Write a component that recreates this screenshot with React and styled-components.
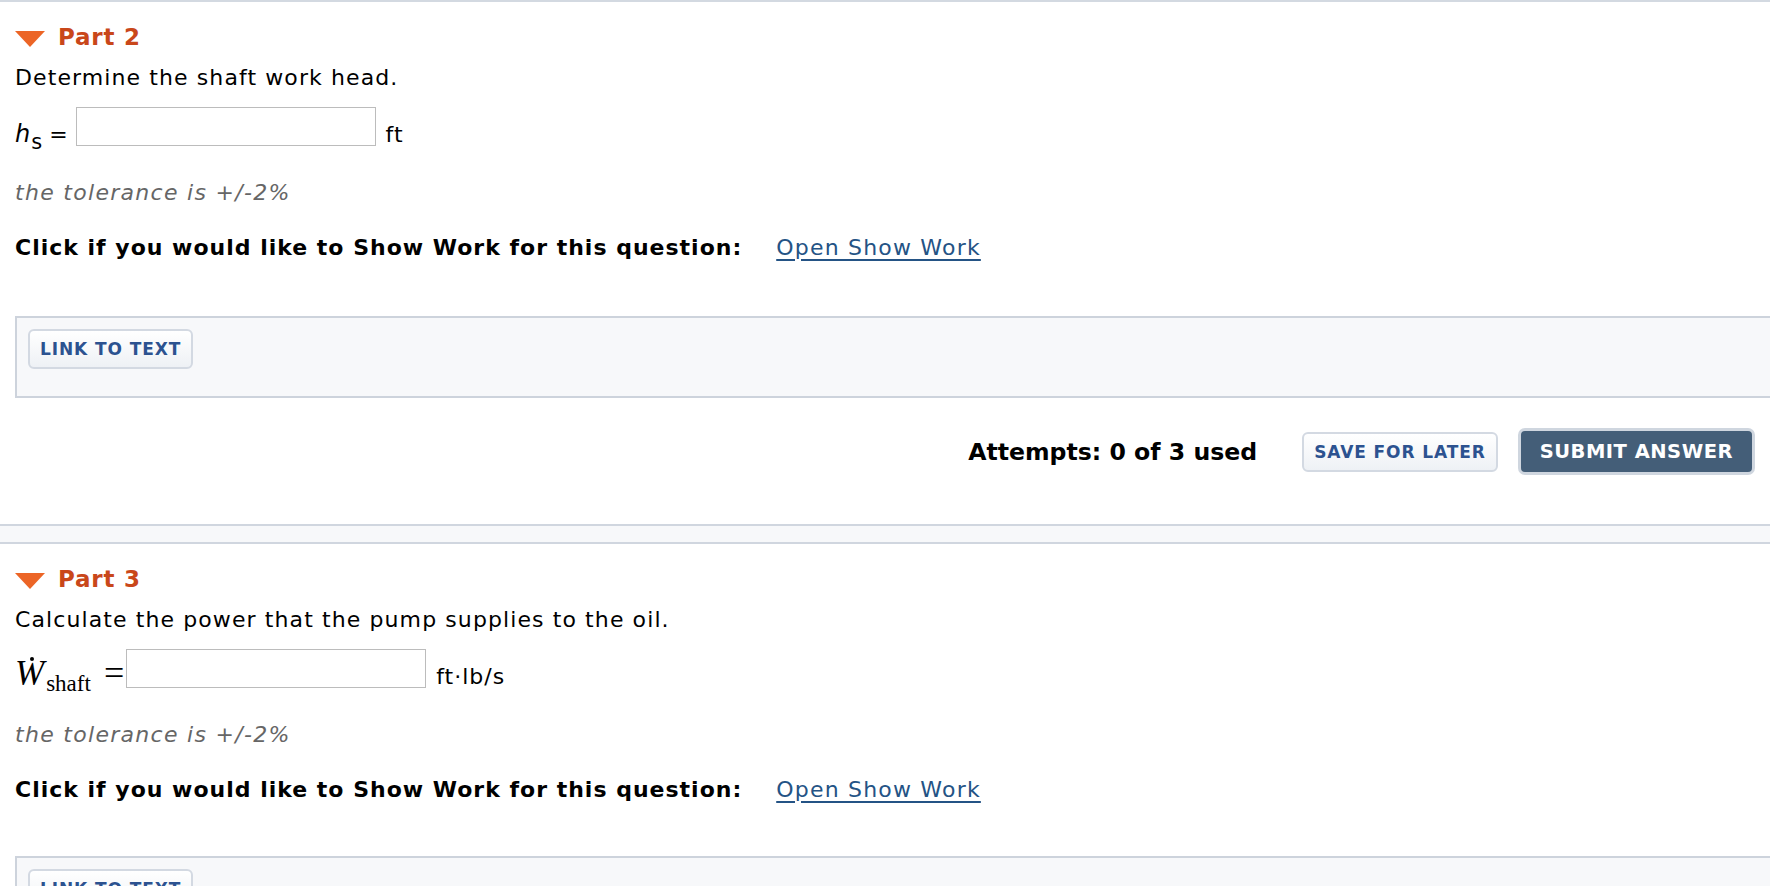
import React from "react";
import styled, { createGlobalStyle } from "styled-components";

const GlobalStyle = createGlobalStyle`
  html, body {
    margin: 0;
    padding: 0;
    background: #fff;
  }
  body {
    font-family: "DejaVu Sans", Verdana, sans-serif;
    color: #000;
    overflow: hidden;
  }
`;

const Page = styled.div`
  width: 100%;
  border-top: 2px solid #d3d9e1;
`;

const Part = styled.section`
  padding: 20px 15px 0 15px;
`;

const Header = styled.div`
  display: flex;
  align-items: center;
  gap: 13px;
  height: 30px;
  font-size: 23px;
  letter-spacing: 0.8px;
  font-weight: bold;
  color: #c9471a;
`;

const Arrow = styled.span`
  display: block;
  width: 0;
  height: 0;
  margin-top: 3px;
  border-left: 15px solid transparent;
  border-right: 15px solid transparent;
  border-top: 16px solid #ec6526;
`;

const Question = styled.div`
  margin-top: 11px;
  height: 30px;
  line-height: 30px;
  font-size: 22px;
  letter-spacing: 1.1px;
`;

const AnswerRow = styled.div`
  display: flex;
  align-items: center;
  margin-top: 14px;
  height: 39px;
  font-size: 22px;
  letter-spacing: 1px;
`;

const Label = styled.span`
  display: inline-flex;
  align-items: baseline;
  margin-right: ${(p) => p.gap || "8px"};
  white-space: nowrap;
  letter-spacing: 0;
  position: relative;
  top: ${(p) => p.shift || "7px"};
`;

const Var = styled.i`
  font-style: italic;
  font-size: 24px;
`;

const Sub = styled.span`
  font-size: 21px;
  position: relative;
  top: 7px;
  margin-left: 1px;
  margin-right: 7px;
`;

const MathVar = styled.span`
  font-family: "Liberation Serif", "Times New Roman", serif;
  font-style: italic;
  font-size: 35px;
  position: relative;
`;

const Dot = styled.span`
  position: absolute;
  left: 15px;
  top: 3px;
  width: 4px;
  height: 4px;
  border-radius: 50%;
  background: #000;
`;

const MathSub = styled.span`
  font-family: "Liberation Serif", "Times New Roman", serif;
  font-size: 23px;
  position: relative;
  top: 6px;
  margin-left: 2px;
  margin-right: 13px;
`;

const MathEq = styled.span`
  font-family: "Liberation Serif", "Times New Roman", serif;
  font-size: 36px;
  margin-right: 2px;
`;

const Input = styled.input`
  box-sizing: border-box;
  width: 300px;
  height: 39px;
  border: 1px solid #bcbcbc;
  background: #fff;
  margin: 0;
  padding: 0 6px;
  outline: none;
`;

const Unit = styled.span`
  margin-left: 10px;
  position: relative;
  top: 8px;
`;

const Tolerance = styled.div`
  margin-top: 32px;
  height: 30px;
  line-height: 30px;
  font-size: 22px;
  letter-spacing: 1.3px;
  font-style: italic;
  color: #666;
`;

const ShowWork = styled.div`
  display: flex;
  align-items: center;
  margin-top: 24px;
  height: 30px;
  font-size: 22px;
  letter-spacing: 1px;
`;

const Bold = styled.span`
  font-weight: bold;
`;

const WorkLink = styled.a`
  margin-left: 34px;
  color: #245385;
  letter-spacing: 1.2px;
  text-decoration: underline;
  text-underline-offset: 4px;
  cursor: pointer;
`;

const LinkBox = styled.div`
  box-sizing: border-box;
  margin-top: ${(p) => p.top || "54px"};
  margin-right: -15px;
  height: 82px;
  padding: 11px;
  background: #f7f8fa;
  border: 2px solid #cdd3dc;
  border-right: none;
`;

const SmallButton = styled.button`
  box-sizing: border-box;
  height: 40px;
  padding: 0 10px;
  border: 2px solid #d3d9e2;
  border-radius: 6px;
  background: linear-gradient(#ffffff, #eef1f5);
  color: #2c5290;
  font-family: "DejaVu Sans", Verdana, sans-serif;
  font-weight: bold;
  font-size: 17px;
  letter-spacing: 0.9px;
  cursor: pointer;
`;

const Actions = styled.div`
  display: flex;
  align-items: center;
  justify-content: flex-end;
  gap: 20px;
  margin-top: 30px;
  height: 47px;
`;

const Attempts = styled.span`
  font-weight: bold;
  font-size: 23.6px;
  margin-right: 25px;
`;

const SubmitButton = styled.button`
  box-sizing: border-box;
  height: 47px;
  padding: 0 19px;
  border: 3px solid #cfd6df;
  border-radius: 7px;
  background: #445e78;
  color: #fff;
  font-family: "DejaVu Sans", Verdana, sans-serif;
  font-weight: bold;
  font-size: 19.5px;
  letter-spacing: 0.5px;
  cursor: pointer;
`;

const Separator = styled.div`
  box-sizing: border-box;
  margin-top: 49px;
  height: 20px;
  background: #f7f8fa;
  border-top: 2px solid #d0d6df;
  border-bottom: 2px solid #d0d6df;
`;

function App() {
  return (
    <>
      <GlobalStyle />
      <Page>
        <Part>
          <Header>
            <Arrow />
            Part 2
          </Header>
          <Question>Determine the shaft work head.</Question>
          <AnswerRow>
            <Label>
              <Var>h</Var>
              <Sub>s</Sub>=
            </Label>
            <Input type="text" />
            <Unit>ft</Unit>
          </AnswerRow>
          <Tolerance>the tolerance is +/-2%</Tolerance>
          <ShowWork>
            <Bold>Click if you would like to Show Work for this question:</Bold>
            <WorkLink>Open Show Work</WorkLink>
          </ShowWork>
          <LinkBox>
            <SmallButton>LINK TO TEXT</SmallButton>
          </LinkBox>
          <Actions>
            <Attempts>Attempts: 0 of 3 used</Attempts>
            <SmallButton>SAVE FOR LATER</SmallButton>
            <SubmitButton>SUBMIT ANSWER</SubmitButton>
          </Actions>
        </Part>
        <Separator />
        <Part>
          <Header>
            <Arrow />
            Part 3
          </Header>
          <Question>Calculate the power that the pump supplies to the oil.</Question>
          <AnswerRow>
            <Label gap="0" shift="4px">
              <MathVar>
                W<Dot />
              </MathVar>
              <MathSub>shaft</MathSub>
              <MathEq>=</MathEq>
            </Label>
            <Input type="text" />
            <Unit>ft·lb/s</Unit>
          </AnswerRow>
          <Tolerance>the tolerance is +/-2%</Tolerance>
          <ShowWork>
            <Bold>Click if you would like to Show Work for this question:</Bold>
            <WorkLink>Open Show Work</WorkLink>
          </ShowWork>
          <LinkBox top="52px">
            <SmallButton>LINK TO TEXT</SmallButton>
          </LinkBox>
        </Part>
      </Page>
    </>
  );
}

export default App;
